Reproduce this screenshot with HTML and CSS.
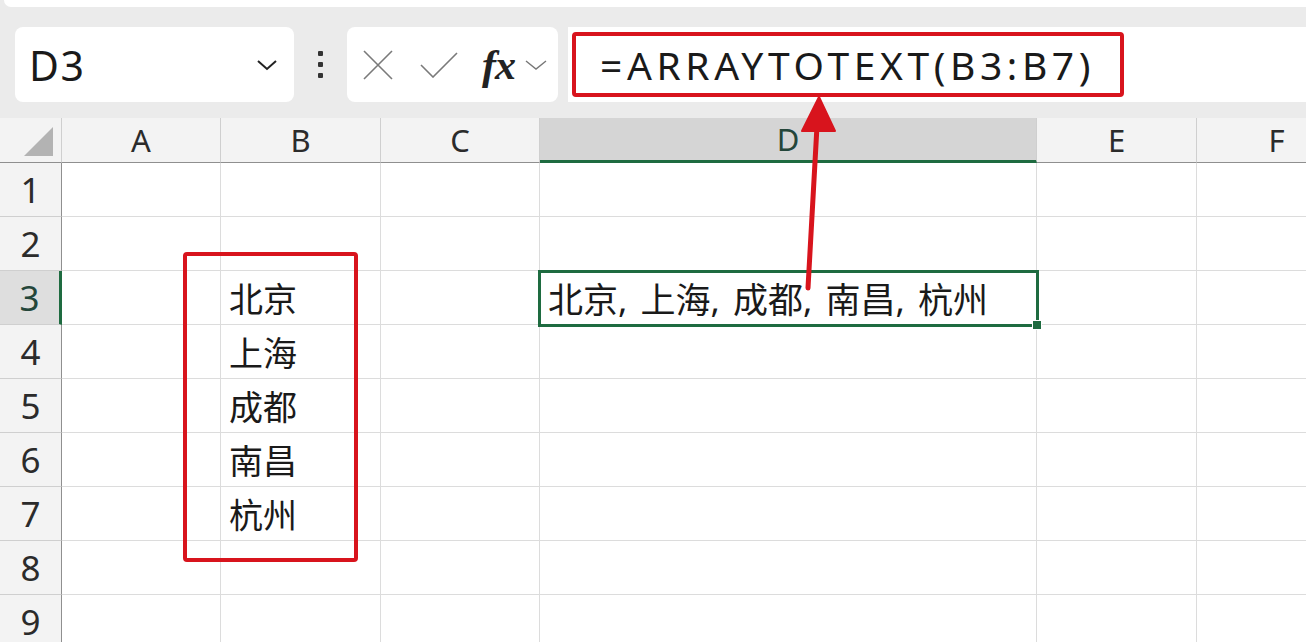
FILE: index.html
```html
<!DOCTYPE html>
<html lang="zh-CN">
<head>
  <meta charset="UTF-8" />
  <meta name="viewport" content="width=device-width, initial-scale=1.0"/>
  <title>ARRAYTOTEXT</title>
  <link rel="stylesheet" href="styles.css">
</head>
<body>
  <div class="top-strip"></div>

  <!-- Formula bar -->
  <div class="toolbar">
    <div class="name-box">
      <span>D3</span>
      <svg class="chevron" width="22" height="12" viewBox="0 0 22 12"><path d="M2 2 L11 10 L20 2" fill="none" stroke="#222" stroke-width="2"/></svg>
    </div>
    <div class="dots"><i></i><i></i><i></i></div>
    <div class="icon-box">
      <svg width="32" height="30" viewBox="0 0 32 30"><path d="M2 1 L30 29 M30 1 L2 29" stroke="#7a7a7a" stroke-width="1.6" fill="none"/></svg>
      <svg width="38" height="26" viewBox="0 0 38 26"><path d="M1 13 L13 25 L37 1" stroke="#7a7a7a" stroke-width="1.6" fill="none"/></svg>
      <span class="fx">fx</span>
      <svg width="22" height="12" viewBox="0 0 22 12"><path d="M1 2 L11 10 L21 2" fill="none" stroke="#777" stroke-width="1.4"/></svg>
    </div>
    <div class="formula">
      <span class="formula-text">=ARRAYTOTEXT(B3:B7)</span>
      <div class="mark mark-formula"></div>
    </div>
  </div>

  <!-- Sheet -->
  <div class="sheet">
    <div class="hd corner"><span class="tri"></span></div>
    <div class="hd col">A</div>
    <div class="hd col">B</div>
    <div class="hd col">C</div>
    <div class="hd col sel">D</div>
    <div class="hd col">E</div>
    <div class="hd col">F</div>

    <div class="hd row">1</div><div class="c"></div><div class="c"></div><div class="c"></div><div class="c"></div><div class="c"></div><div class="c"></div>
    <div class="hd row">2</div><div class="c"></div><div class="c"></div><div class="c"></div><div class="c"></div><div class="c"></div><div class="c"></div>
    <div class="hd row sel">3</div><div class="c"></div><div class="c">北京</div><div class="c"></div><div class="c active">北京, 上海, 成都, 南昌, 杭州<span class="handle"></span></div><div class="c"></div><div class="c"></div>
    <div class="hd row">4</div><div class="c"></div><div class="c">上海</div><div class="c"></div><div class="c"></div><div class="c"></div><div class="c"></div>
    <div class="hd row">5</div><div class="c"></div><div class="c">成都</div><div class="c"></div><div class="c"></div><div class="c"></div><div class="c"></div>
    <div class="hd row">6</div><div class="c"></div><div class="c">南昌</div><div class="c"></div><div class="c"></div><div class="c"></div><div class="c"></div>
    <div class="hd row">7</div><div class="c"></div><div class="c">杭州</div><div class="c"></div><div class="c"></div><div class="c"></div><div class="c"></div>
    <div class="hd row">8</div><div class="c"></div><div class="c"></div><div class="c"></div><div class="c"></div><div class="c"></div><div class="c"></div>
    <div class="hd row">9</div><div class="c"></div><div class="c"></div><div class="c"></div><div class="c"></div><div class="c"></div><div class="c"></div>

    <div class="mark mark-range"></div>
  </div>

  <!-- arrow from D3 to the formula -->
  <svg class="arrow" width="1306" height="642" viewBox="0 0 1306 642">
    <line x1="808" y1="288" x2="817" y2="126" stroke="#d8141d" stroke-width="5" stroke-linecap="round"/>
    <polygon points="819,97 802,131 835,131" fill="#d8141d" stroke="#d8141d" stroke-width="2" stroke-linejoin="round"/>
  </svg>
</body>
</html>
```

FILE: styles.css
```css
:root {
  --bar-bg: #ebebeb;
  --grid: #dcdcdc;
  --head-bg: #f3f3f3;
  --head-line: #cfcfcf;
  --green: #1e6b40;
  --red: #d8141d;
  --text: #1a1a1a;
}

* {
  box-sizing: border-box;
}

body {
  margin: 0;
  width: 1306px;
  height: 642px;
  overflow: hidden;
  position: relative;
  background: var(--bar-bg);
  font-family: "Noto Sans", "Noto Sans CJK SC", sans-serif;
  color: var(--text);
}

.top-strip {
  height: 7px;
  margin-left: 4px;
  background: #fff;
  border-bottom-left-radius: 14px;
}

.toolbar {
  display: flex;
  align-items: center;
  height: 111px;
  padding: 20px 0 16px 15px;
}

.name-box {
  width: 279px;
  height: 75px;
  background: #fff;
  border-radius: 8px;
  display: flex;
  align-items: center;
  justify-content: space-between;
  padding: 0 16px 0 14px;
  font-size: 41px;
  letter-spacing: 1.5px;
}

.dots {
  width: 53px;
  display: flex;
  flex-direction: column;
  align-items: center;
  gap: 6px;
}

.dots i {
  width: 5px;
  height: 5px;
  border-radius: 1px;
  background: #333;
}

.icon-box {
  width: 211px;
  height: 75px;
  background: #fff;
  border-radius: 8px;
  display: flex;
  align-items: center;
  padding: 0 0 0 15px;
  gap: 24px;
}

.icon-box svg:nth-child(2) {
  margin-left: 2px;
}

.fx {
  font-family: "Liberation Serif", serif;
  font-style: italic;
  font-weight: bold;
  font-size: 42px;
  margin-left: 0;
  margin-right: -14px;
  color: #222;
  letter-spacing: -1px;
}

.formula {
  position: relative;
  flex: 1;
  height: 75px;
  margin-left: 10px;
  background: #fff;
  display: flex;
  align-items: center;
  padding-left: 32px;
}

.formula-text {
  font-size: 39px;
  letter-spacing: 4.6px;
}

.mark {
  position: absolute;
  border: 4px solid var(--red);
  border-radius: 4px;
}

.mark-formula {
  left: 4px;
  top: 5px;
  width: 552px;
  height: 65px;
}

.sheet {
  position: relative;
  display: grid;
  grid-template-columns: 62px 159px 160px 159px 497px 160px 160px;
  grid-template-rows: 45px repeat(9, 54px);
  background: #fff;
}

.hd {
  background: var(--head-bg);
  display: flex;
  align-items: center;
  justify-content: center;
  color: #2b2b2b;
}

.col {
  font-size: 31px;
  border-right: 1px solid var(--head-line);
  border-bottom: 1px solid #8f8f8f;
}

.col.sel {
  background: #d5d5d5;
  color: #24463a;
  border-bottom: 3px solid var(--green);
}

.row {
  font-size: 35px;
  border-right: 1px solid #8f8f8f;
  border-bottom: 1px solid var(--head-line);
}

.row.sel {
  background: #dedede;
  color: #24463a;
  border-right: 3px solid var(--green);
}

.corner {
  border-right: 1px solid var(--head-line);
  border-bottom: 1px solid #8f8f8f;
  justify-content: flex-end;
  align-items: flex-end;
  padding: 0 8px 6px 0;
}

.tri {
  width: 0;
  height: 0;
  border-left: 29px solid transparent;
  border-bottom: 29px solid #b3b3b3;
}

.c {
  border-right: 1px solid var(--grid);
  border-bottom: 1px solid var(--grid);
  display: flex;
  align-items: center;
  padding-left: 8px;
  font-size: 34px;
  white-space: nowrap;
}

.c.active {
  position: relative;
  font-size: 35px;
  word-spacing: 4px;
}

.c.active::after {
  content: "";
  position: absolute;
  left: -2px;
  top: -1px;
  right: -3px;
  bottom: -3px;
  border: 3px solid var(--green);
}

.handle {
  position: absolute;
  right: -5px;
  bottom: -5px;
  width: 8px;
  height: 8px;
  background: var(--green);
  outline: 1px solid #fff;
  z-index: 2;
}

.mark-range {
  left: 183px;
  top: 134px;
  width: 175px;
  height: 310px;
}

.arrow {
  position: absolute;
  left: 0;
  top: 0;
  pointer-events: none;
}
```
